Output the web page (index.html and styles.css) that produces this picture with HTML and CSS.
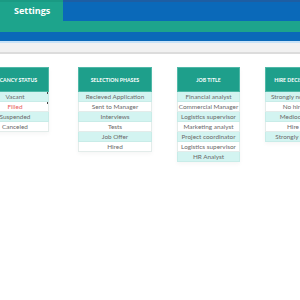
FILE: index.html
```html
<!DOCTYPE html>
<html>
<head>
<meta charset="utf-8">
<link rel="stylesheet" href="styles.css">
</head>
<body>
<div class="topbar">
  <div class="tab">Settings</div>
</div>
<div class="band-teal"></div>
<div class="band-blue"></div>
<div class="band-light"></div>
<div class="band-gray"></div>

<div class="tables">
  <div class="tbl t1">
    <div class="th">VACANCY STATUS</div>
    <div class="td c">Vacant<span class="mark m1"></span></div>
    <div class="td red">Filled<span class="mark m2"></span></div>
    <div class="td c">Suspended</div>
    <div class="td">Canceled</div>
  </div>
  <div class="tbl t2">
    <div class="th">SELECTION PHASES</div>
    <div class="td c">Recieved Application</div>
    <div class="td">Sent to Manager</div>
    <div class="td c">Interviews</div>
    <div class="td">Tests</div>
    <div class="td c">Job Offer</div>
    <div class="td">Hired</div>
  </div>
  <div class="tbl t3">
    <div class="th">JOB TITLE</div>
    <div class="td c">Financial analyst</div>
    <div class="td">Commercial Manager</div>
    <div class="td c">Logistics supervisor</div>
    <div class="td">Marketing analyst</div>
    <div class="td c">Project coordinator</div>
    <div class="td">Logistics supervisor</div>
    <div class="td c">HR Analyst</div>
  </div>
  <div class="tbl t4">
    <div class="th">HIRE DECISION</div>
    <div class="td c">Strongly no hire</div>
    <div class="td">No hire</div>
    <div class="td c">Mediocre</div>
    <div class="td">Hire</div>
    <div class="td c">Strongly hire</div>
  </div>
</div>
</body>
</html>
```

FILE: styles.css
```css
html, body {
  margin: 0;
  padding: 0;
  background: #ffffff;
  width: 300px;
  height: 300px;
  overflow: hidden;
}
body {
  font-family: Lato, "Open Sans", sans-serif;
}
.topbar {
  height: 21px;
  background: #0a69b9;
  border-top: 2px solid #1d5ea3;
  box-sizing: border-box;
  display: flex;
}
.tab {
  width: 63px;
  margin-top: -2px;
  height: 21px;
  background: #1da48c;
  border-top: 2px solid #1a9a83;
  box-sizing: border-box;
  color: #ffffff;
  font-family: "Open Sans", sans-serif;
  font-weight: 700;
  font-size: 9px;
  line-height: 17px;
  padding-left: 14px;
}
.band-teal {
  height: 11px;
  background: #1da48c;
}
.band-blue {
  height: 9px;
  background: #0a69b9;
}
.band-light {
  height: 2px;
  background: #c9e2f6;
}
.band-gray {
  height: 9px;
  background: #f1f1f1;
  border-bottom: 2px solid #dcdcdc;
}
.tables {
  display: flex;
  align-items: flex-start;
  gap: 25px;
  margin-top: 13px;
  margin-left: -19px;
}
.tbl {
  flex: none;
  display: flex;
  flex-direction: column;
  box-shadow: 0 2px 4px rgba(0,0,0,0.04);
}
.t1 { width: 68px; margin-right: 4px; }
.t2 { width: 74px; }
.t3 { width: 63px; }
.t4 { width: 56px; }
.th {
  height: 25px;
  background: #1e9f8b;
  border: 1px solid #4fb8a7;
  box-sizing: border-box;
  color: #ffffff;
  font-weight: 700;
  font-size: 5.2px;
  display: flex;
  align-items: center;
  justify-content: center;
  white-space: nowrap;
  overflow: hidden;
}
.td {
  position: relative;
  height: 10px;
  box-sizing: border-box;
  border: 1px solid #e3ecea;
  border-top: none;
  background: #ffffff;
  color: #6a6a6a;
  font-size: 6.4px;
  line-height: 9px;
  text-align: center;
  white-space: nowrap;
  overflow: hidden;
}
.td.c {
  background: #d3f4f1;
  border-color: #c8ece8;
}
.td.red {
  color: #e8605c;
}
.mark {
  position: absolute;
  right: 0;
  top: 0;
  width: 1px;
  height: 2px;
  background: #444;
}
```
